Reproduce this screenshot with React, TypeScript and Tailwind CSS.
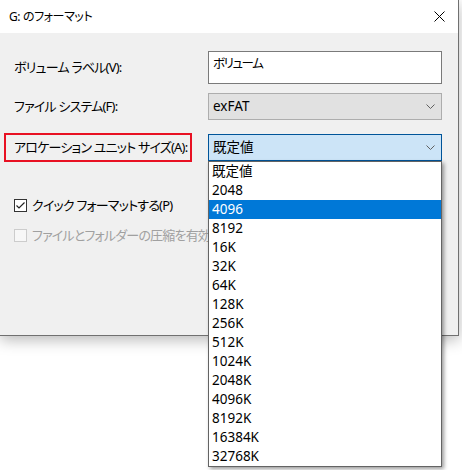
import React from "react";

const items = [
  "既定値",
  "2048",
  "4096",
  "8192",
  "16K",
  "32K",
  "64K",
  "128K",
  "256K",
  "512K",
  "1024K",
  "2048K",
  "4096K",
  "8192K",
  "16384K",
  "32768K",
];

function Chevron() {
  return (
    <svg width="9" height="5" viewBox="0 0 9 5" className="block">
      <path d="M0.5 0.5 L4.5 4.5 L8.5 0.5" fill="none" stroke="#606060" strokeWidth="1" />
    </svg>
  );
}

export default function App() {
  return (
    <div
      className="relative w-[462px] h-[470px] bg-white overflow-hidden text-black [font-feature-settings:'palt']"
      style={{ fontFamily: '"Noto Sans", "Noto Sans CJK JP", sans-serif' }}
    >
      {/* dialog */}
      <div className="w-[459px] border-r border-b border-[#707070] shadow-[0_4px_14px_rgba(0,0,0,0.28)] flex flex-col">
        <div className="h-[33px] bg-white flex items-center justify-between pl-[9px] pr-[13px]">
          <span className="text-[12px] leading-none tracking-[-0.4px]">G: のフォーマット</span>
          <svg width="11" height="11" viewBox="0 0 11 11" className="block">
            <path d="M0.5 0.5 L10.5 10.5 M10.5 0.5 L0.5 10.5" stroke="#000" strokeWidth="1" />
          </svg>
        </div>
        <div className="h-[302px] bg-[#f0f0f0] flex flex-col text-[13px] leading-none tracking-[-0.8px]">
          {/* row 1 */}
          <div className="mt-[18px] flex items-center h-[33px]">
            <div className="w-[208px] pl-[14px] whitespace-nowrap">ボリューム ラベル(V):</div>
            <div className="w-[234px] h-[33px] border border-[#7a7a7a] bg-white pl-[4px] pt-[6px] text-[12.5px] tracking-[-1.4px]">
              ボリューム
            </div>
          </div>
          {/* row 2 */}
          <div className="mt-[9px] flex items-center h-[27px]">
            <div className="w-[208px] pl-[14px] whitespace-nowrap">ファイル システム(F):</div>
            <div className="w-[234px] h-[27px] border border-[#adadad] bg-[#e1e1e1] pl-[4px] pr-[6px] flex items-center justify-between">
              <span className="tracking-normal text-[13.5px]">exFAT</span>
              <Chevron />
            </div>
          </div>
          {/* row 3 */}
          <div className="mt-[13px] flex items-center h-[29px]">
            <div className="w-[208px] pl-[4px]">
              <div className="w-[188px] h-[29px] border-2 border-[#e81123] pl-[8px] flex items-center whitespace-nowrap">
                アロケーション ユニット サイズ(A):
              </div>
            </div>
            <div className="w-[234px] h-[27px] border border-[#005499] bg-[#cce4f7] pl-[4px] pr-[6px] flex items-center justify-between">
              <span className="tracking-normal text-[13.5px]">既定値</span>
              <Chevron />
            </div>
          </div>
          {/* checkbox 1 */}
          <div className="mt-[34px] h-[19px] flex items-center pl-[14px] whitespace-nowrap">
            <div className="w-[13px] h-[13px] border border-[#333333] bg-white flex items-center justify-center">
              <svg width="11" height="11" viewBox="0 0 11 11" className="block">
                <path d="M1.5 5.5 L4 8 L9.5 2.5" fill="none" stroke="#222" strokeWidth="1.2" />
              </svg>
            </div>
            <span className="ml-[5px]">クイック フォーマットする(P)</span>
          </div>
          {/* checkbox 2 */}
          <div className="mt-[11px] h-[19px] w-[208px] overflow-hidden flex items-center pl-[14px] whitespace-nowrap">
            <div className="w-[13px] h-[13px] shrink-0 border border-[#cccccc] bg-[#f7f7f7]" />
            <span className="ml-[5px] text-[#a0a0a0]">ファイルとフォルダーの圧縮を有効にする(E)</span>
          </div>
        </div>
      </div>

      {/* dropdown list */}
      <div className="absolute left-[208px] top-[161px] w-[234px] border border-[#646464] bg-white shadow-[2px_2px_4px_rgba(0,0,0,0.4)] text-[13.5px] leading-none">
        {items.map((it, i) => (
          <div
            key={it}
            className={
              i === 2
                ? "h-[19px] flex items-center pl-[3px] bg-[#0078d7] text-white"
                : "h-[19px] flex items-center pl-[3px]"
            }
          >
            {it}
          </div>
        ))}
      </div>
    </div>
  );
}
